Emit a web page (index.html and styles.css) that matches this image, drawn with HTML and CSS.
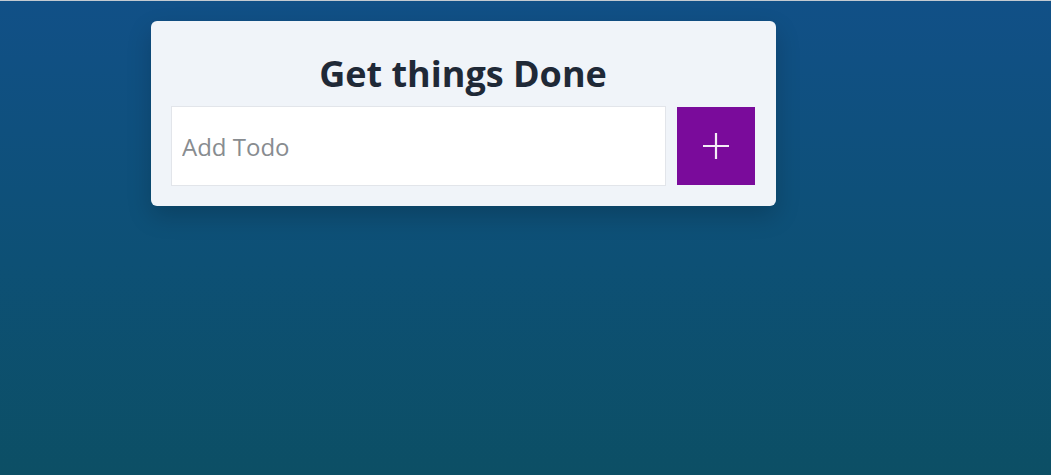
FILE: index.html
```html
<!DOCTYPE html>
<html lang="en">
<head>
<meta charset="utf-8">
<title>Todo</title>
<link rel="stylesheet" href="styles.css">
</head>
<body>
<div class="page">
  <div class="card">
    <h1 class="title">Get things Done</h1>
    <form class="add-row" onsubmit="return false">
      <input class="todo-input" type="text" placeholder="Add Todo">
      <button class="add-btn" type="submit" aria-label="Add">
        <svg width="28" height="28" viewBox="0 0 28 28"><path d="M14 1v26M1 14h26" stroke="#f4eef6" stroke-width="2.2" fill="none"/></svg>
      </button>
    </form>
  </div>
</div>
</body>
</html>
```
FILE: styles.css
```css
html, body {
  margin: 0;
  padding: 0;
  height: 100%;
}
body {
  font-family: "Open Sans", "Noto Sans", sans-serif;
  background: linear-gradient(180deg, #115087 0%, #0d5075 55%, #0c4f65 100%);
  border-top: 1px solid #c3cad1;
  box-sizing: border-box;
  overflow: hidden;
}
.page {
  padding: 20px 0 0 151px;
}
.card {
  width: 625px;
  box-sizing: border-box;
  background: #f0f4f9;
  border-radius: 6px;
  padding: 20px 21px 20px 20px;
  box-shadow: 0 10px 25px rgba(0, 0, 0, 0.18);
}
.title {
  margin: 13px 0 12px;
  font-size: 36px;
  line-height: 40px;
  font-weight: 700;
  color: #1f2937;
  text-align: center;
}
.add-row {
  display: flex;
  align-items: center;
  gap: 11px;
  margin: 0;
}
.todo-input {
  flex: 1;
  height: 80px;
  box-sizing: border-box;
  border: 1px solid #e2e5ea;
  background: #fff;
  padding: 0 10px;
  font-family: "Open Sans", "Noto Sans", sans-serif;
  font-size: 24px;
  color: #333;
  outline: none;
}
.todo-input::placeholder {
  color: #888c90;
}
.add-btn {
  width: 78px;
  height: 78px;
  border: 0;
  padding: 0;
  background: #7a0b9b;
  display: flex;
  align-items: center;
  justify-content: center;
  cursor: pointer;
}
```
